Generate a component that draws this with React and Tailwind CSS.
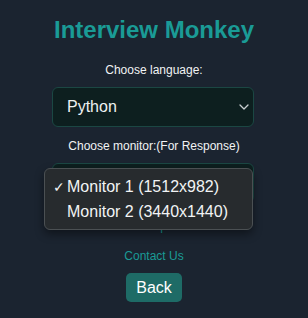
import { useState } from 'react'

function Chevron() {
  return (
    <svg width="10" height="6" viewBox="0 0 10 6" fill="none" className="absolute right-[4px] top-1/2 -translate-y-1/2">
      <path d="M1 1l4 4 4-4" stroke="#c9cfd1" strokeWidth="1.3" strokeLinecap="round" strokeLinejoin="round" />
    </svg>
  )
}

function FakeSelect({ value }) {
  return (
    <div className="relative w-[202px] h-[40px] rounded-[6px] border-[1.5px] border-[#1b4743] bg-[#0d1f1f] flex items-center pl-[14px] text-[16px] text-[#eef2f2]">
      {value}
      <Chevron />
    </div>
  )
}

export default function App() {
  const [monitor] = useState(0)
  const monitors = ['Monitor 1 (1512x982)', 'Monitor 2 (3440x1440)']

  return (
    <div className="min-h-[318px] w-full bg-[#1b2430] font-['Liberation_Sans',Arial,sans-serif] flex flex-col items-center pt-[14px]">
      <h1 className="text-[24px] leading-[32px] font-bold text-[#1a9b96]">Interview Monkey</h1>

      <p className="mt-[16px] text-[12px] leading-[16px] text-[#f1f3f4]">Choose language:</p>
      <div className="mt-[9px] mr-[2px]">
        <FakeSelect value="Python" />
      </div>

      <p className="mt-[11px] text-[12px] leading-[16px] text-[#f1f3f4]">Choose monitor:(For Response)</p>
      <div className="relative mt-[9px] mr-[2px]">
        <FakeSelect value={monitors[monitor]} />

        {/* open dropdown menu */}
        <div className="absolute left-[-8px] top-[5px] z-10 w-[209px] rounded-[6px] border border-[#4b5053] bg-[#272b2e] py-[5px] shadow-[0_4px_10px_rgba(0,0,0,0.45)]">
          {monitors.map((m, i) => (
            <div key={m} className="h-[25px] flex items-center text-[16px] text-[#f2f4f5]">
              <span className="w-[22px] pl-[8px] text-[14px] leading-none">{i === monitor ? '✓' : ''}</span>
              {m}
            </div>
          ))}
        </div>
      </div>

      <a className="mt-[15px] text-[12px] leading-[16px] text-[#1a9b96]">Membership Details</a>
      <a className="mt-[14px] text-[12px] leading-[16px] text-[#1a9b96]">Contact Us</a>

      <button className="mt-[9px] h-[29px] px-[10px] rounded-[5px] bg-[#1e6b66] text-[16px] text-white">
        Back
      </button>
    </div>
  )
}
